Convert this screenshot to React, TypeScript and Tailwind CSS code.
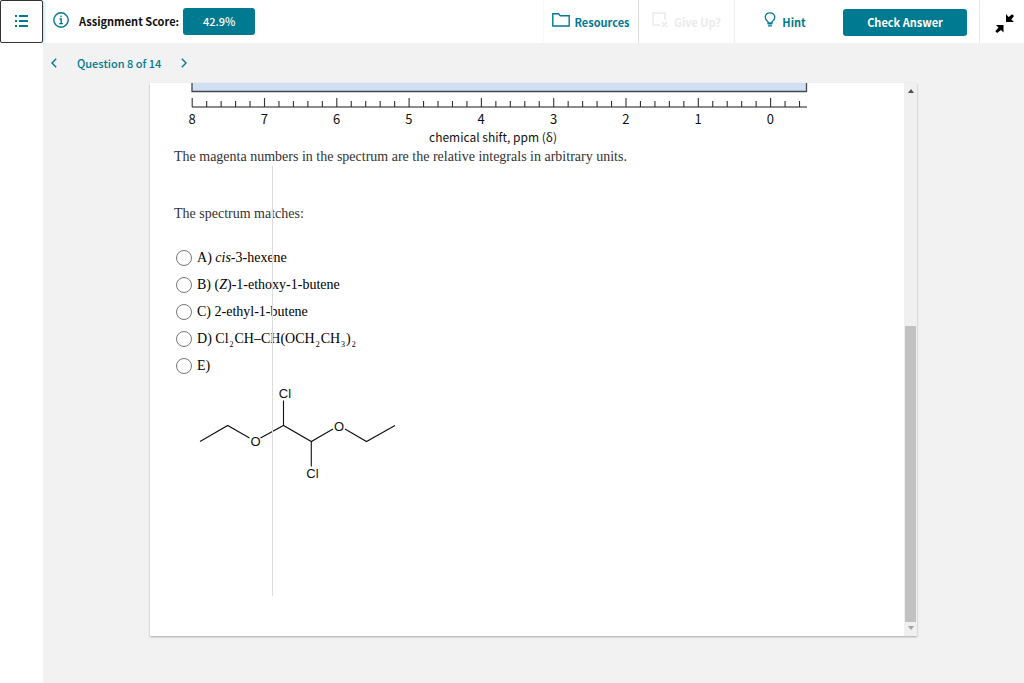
import { useState } from "react";
import type { ReactNode } from "react";

const TEAL = "#007a91";

const ticks = Array.from({ length: 43 }, (_, i) => i);
const axisLabels = [8, 7, 6, 5, 4, 3, 2, 1, 0];

function SpectrumAxis() {
  return (
    <svg
      className="block h-[62px] w-[640px]"
      viewBox="0 0 640 62"
      role="img"
      aria-label="Chemical shift axis"
      fontFamily='"Noto Sans CJK SC", sans-serif'
      fontSize="13"
      fill="#111"
    >
      <path d="M18 -2V8.5H632.5V-2" fill="#d0dff2" stroke="#44474f" strokeWidth="1.3" />
      <path d="M18 24H633" stroke="#666" strokeWidth="1.4" />
      {ticks.map((i) => {
        const x = 18.2 + i * 14.46;
        return (
          <path
            key={i}
            d={`M${x} ${i % 5 === 0 ? 15 : 18}V24`}
            stroke="#333"
            strokeWidth="1.1"
          />
        );
      })}
      {axisLabels.map((n, i) => (
        <text key={n} x={18 + i * 72.3} y="41" textAnchor="middle">
          {n}
        </text>
      ))}
      <text x="319" y="59" fontSize="12" textAnchor="middle">
        chemical shift, ppm (δ)
      </text>
    </svg>
  );
}

function Molecule() {
  return (
    <svg
      className="block h-[100px] w-[210px]"
      viewBox="0 0 210 100"
      role="img"
      aria-label="1,2-dichloro-1,2-diethoxyethane"
      fontFamily='"Liberation Sans", sans-serif'
      fontSize="13"
      fill="#111"
    >
      <g fill="none" stroke="#111" strokeWidth="1.1">
        <path d="M6 61.500L33.700 45.500L55.500 58" />
        <path d="M66.500 58L89.500 45.500L117.300 61.500L139 49" />
        <path d="M89.500 45.500V20.500M117.300 61.500V86.500" />
        <path d="M151 49L172.500 61.500L201 45.500" />
      </g>
      <text x="91" y="18" textAnchor="middle">Cl</text>
      <text x="61.500" y="66" textAnchor="middle">O</text>
      <text x="145" y="50.500" textAnchor="middle">O</text>
      <text x="118.500" y="98" textAnchor="middle">Cl</text>
    </svg>
  );
}

function Sub({ children }: { children: ReactNode }) {
  return <sub className="bottom-[-4px] px-px text-[8px]">{children}</sub>;
}

const options: { id: string; label: ReactNode }[] = [
  { id: "A", label: <><i>cis</i>-3-hexene</> },
  { id: "B", label: <>(<i>Z</i>)-1-ethoxy-1-butene</> },
  { id: "C", label: <>2-ethyl-1-butene</> },
  {
    id: "D",
    label: (
      <>
        Cl<Sub>2</Sub>CH–CH(OCH<Sub>2</Sub>CH<Sub>3</Sub>)<Sub>2</Sub>
      </>
    ),
  },
  { id: "E", label: null },
];

function Header() {
  return (
    <header className="flex h-[43px] bg-white text-[11px] text-[#007a91]">
      <button
        aria-label="Assignment menu"
        className="flex w-[43px] items-center justify-center rounded-[2px] border border-[#333] bg-white pb-0.5 shadow-[0_0_4px_#8cc5d0]"
      >
        <svg className="h-3 w-[13px]" viewBox="0 0 13 12" fill={TEAL}>
          <path d="M0 0h2v2H0zM0 5h2v2H0zM0 10h2v2H0zM4 0h9v2H4zM4 5h9v2H4zM4 10h9v2H4z" />
        </svg>
      </button>
      <div className="flex flex-1 items-center pl-2.5">
        <button aria-label="Assignment information" className="pb-1">
          <svg className="size-4" viewBox="0 0 16 16" fill="none" stroke={TEAL} strokeWidth="1.4">
            <circle cx="8" cy="8" r="7.200" />
            <path d="M6.500 7H8.200V11.500M6.200 11.600H10M7.300 4.500H8.700" />
          </svg>
        </button>
        <span className="ml-2.5 font-bold text-[#111]">Assignment Score:</span>
        <span className="ml-1 flex h-[27px] w-[72px] items-center justify-center rounded-[3px] bg-[#007a91] font-medium text-white">
          42.9%
        </span>
      </div>
      <button className="flex w-24 items-center justify-center gap-1 border-x border-l-[#f8f8f8] border-r-[#dedede] font-bold">
        <svg className="mb-1 h-[14px] w-[18px]" viewBox="0 0 18 14" fill="none" stroke={TEAL} strokeWidth="1.4">
          <path d="M.8 13V.8H6.500L8.300 2.800H17.200V13Z" />
        </svg>
        <span className="pt-0.5">Resources</span>
      </button>
      <button
        disabled
        className="flex w-24 items-center justify-center gap-1.5 border-r border-[#eee] font-bold text-[#ebebeb]"
      >
        <svg className="mb-1 h-4 w-4" viewBox="0 0 16 16" fill="none" stroke="#ebebeb" strokeWidth="1.5">
          <path d="M8 13H1V1H13V8M10 10L15 15M15 10L10 15" />
        </svg>
        <span className="pt-0.5">Give Up?</span>
      </button>
      <button className="flex w-[100px] items-center justify-center gap-1.5 font-bold">
        <svg className="mb-1 h-[15px] w-3" viewBox="0 0 12 15" fill="none" stroke={TEAL} strokeWidth="1.3">
          <path d="M4 11V9.800C2.600 8.500 1.200 7.500 1.200 5.300C1.200 2.700 3.300.8 6 .8S10.800 2.700 10.800 5.300C10.800 7.500 9.400 8.500 8 9.800V11ZM3.600 11.800H8.400M4 13.900H8" />
        </svg>
        <span className="pt-0.5">Hint</span>
      </button>
      <div className="flex items-center border-r border-[#e8e8e8] pl-2 pr-3 pt-px">
        <button className="h-[27px] w-[124px] rounded-[3px] bg-[#007a91] font-bold text-white">
          Check Answer
        </button>
      </div>
      <button aria-label="Exit full screen" className="flex w-11 items-center justify-center pl-1 pt-1">
        <svg className="h-[19px] w-[19px]" viewBox="0 0 19 19" fill="#000">
          <path d="M11 0V8H19L16.300 5.600L19 2L17.200 .3L13.600 3ZM1 11H8.500V18.500L6 16L2.200 19L.3 17.200L3.500 13.500Z" />
        </svg>
      </button>
    </header>
  );
}

function Chevron({ d }: { d: string }) {
  return (
    <svg className="h-2.5 w-1.5" viewBox="0 0 6 10" fill="none" stroke={TEAL} strokeWidth="1.4">
      <path d={d} />
    </svg>
  );
}

export default function App() {
  const [answer, setAnswer] = useState("");
  return (
    <div className="flex min-h-screen flex-col bg-[#f2f2f2] font-['Noto_Sans_CJK_SC',sans-serif]">
      <Header />
      <div className="flex flex-1">
        <aside className="w-[43px] shrink-0 bg-white" />
        <main className="flex flex-1 flex-col">
          <nav className="flex h-10 items-center pl-2 text-[11px] font-medium text-[#007a91]">
            <button aria-label="Previous question">
              <Chevron d="M5.200.7L1 5L5.200 9.300" />
            </button>
            <span className="ml-5 mr-5">Question 8 of 14</span>
            <button aria-label="Next question">
              <Chevron d="M.8.7L5 5L.8 9.300" />
            </button>
          </nav>
          <section className="mx-[107px] mb-[47px] flex flex-1 bg-white shadow-[0_1px_2px_#aaa]">
            <div className="relative flex-1 overflow-hidden pl-6 font-['Liberation_Serif',serif] text-[14px] leading-5 text-[#333]">
              <SpectrumAxis />
              <p className="pt-0.5">
                The magenta numbers in the spectrum are the relative integrals in arbitrary units.
              </p>
              <fieldset className="pt-[37px]">
                <legend className="contents">The spectrum matches:</legend>
                <div className="mt-5 text-black">
                  {options.map((o) => (
                    <label key={o.id} className="flex h-[27px] items-center gap-[5px] pl-0.5">
                      <input
                        type="radio"
                        name="answer"
                        value={o.id}
                        checked={answer === o.id}
                        onChange={() => setAnswer(o.id)}
                        className="size-4 appearance-none rounded-full border border-[#777] bg-white checked:border-4 checked:border-[#007a91]"
                      />
                      <span>
                        {o.id}) {o.label}
                      </span>
                    </label>
                  ))}
                </div>
              </fieldset>
              <div className="pl-5 pt-px">
                <Molecule />
              </div>
              <div className="absolute bottom-10 left-[122px] top-[83px] w-px bg-[#dcdcdc]" />
            </div>
            <div className="flex w-[13px] flex-col items-center bg-[#f0f0f0]">
              <svg className="mt-1.5 h-1 w-1.5" viewBox="0 0 6 4" fill="#505050">
                <path d="M3 0L6 4H0Z" />
              </svg>
              <div className="flex-[233]" />
              <div className="w-[11px] flex-[297] bg-[#c1c1c1]" />
              <svg className="mb-1.5 mt-1 h-1 w-1.5" viewBox="0 0 6 4" fill="#a3a3a3">
                <path d="M0 0H6L3 4Z" />
              </svg>
            </div>
          </section>
        </main>
      </div>
    </div>
  );
}
